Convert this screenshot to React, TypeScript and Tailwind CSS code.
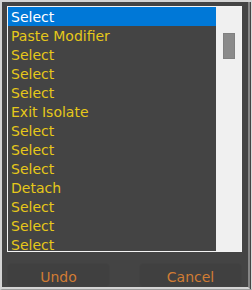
const items = [
  "Select",
  "Paste Modifier",
  "Select",
  "Select",
  "Select",
  "Exit Isolate",
  "Select",
  "Select",
  "Select",
  "Detach",
  "Select",
  "Select",
  "Select",
  "Select",
];

export default function App() {
  return (
    <div className="w-[252px] h-[290px] overflow-hidden border-t-2 border-l-2 border-r border-b border-t-[#d4d4d4] border-l-[#d4d4d4] border-r-[#d8d8d8] border-b-[#9c9c9c] bg-[#444444] font-['DejaVu_Sans',sans-serif]">
      <div className="h-full border-r border-r-[#444444]">
        <div className="h-full flex flex-col border-r-2 border-b-2 border-r-[#858585] border-b-[#d4d4d4] pl-[5px] pr-[6px] pt-[4px]">
          {/* list box */}
          <div className="flex w-[235px] h-[246px] border border-[#f4f4f4] bg-[#444444]">
            <div className="flex-1 overflow-hidden">
              {items.map((item, i) => (
                <div
                  key={i}
                  className={
                    i === 0
                      ? "h-[19px] flex items-center pl-[3px] bg-[#0078d7] text-white text-[14px] leading-none whitespace-nowrap"
                      : "h-[19px] flex items-center pl-[3px] text-[#e6c81a] text-[14px] leading-none whitespace-nowrap"
                  }
                >
                  {item}
                </div>
              ))}
            </div>
            <div className="w-[25px] h-full bg-[#f0f0f0] pt-[26px]">
              <div className="mx-auto w-[12px] h-[26px] bg-[#8a8a8a] border border-[#808080]" />
            </div>
          </div>

          <div className="mt-[11px] flex justify-between">
            <button className="w-[103px] h-[24px] pt-[3px] rounded-[5px] bg-[#404040] border border-[#424242] text-[#d07c34] text-[14px] leading-none">
              Undo
            </button>
            <button className="w-[103px] h-[24px] pt-[3px] rounded-[5px] bg-[#404040] border border-[#424242] text-[#d07c34] text-[14px] leading-none">
              Cancel
            </button>
          </div>
        </div>
      </div>
    </div>
  );
}
